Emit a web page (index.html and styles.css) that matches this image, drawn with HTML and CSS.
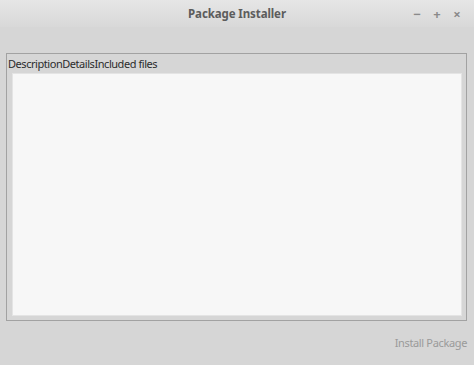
FILE: index.html
```
<!DOCTYPE html>
<html lang="en">
<head>
  <meta charset="UTF-8" />
  <title>Package Installer</title>
  <link rel="stylesheet" href="styles.css">
</head>
<body>
  <div class="window">
    <header class="titlebar">
      <span class="title">Package Installer</span>
      <div class="controls">
        <span class="ctl">&minus;</span>
        <span class="ctl">+</span>
        <span class="ctl">&times;</span>
      </div>
    </header>

    <main class="content">
      <div class="frame">
        <div class="tabs">
          <span>Description</span><span>Details</span><span>Included files</span>
        </div>
        <div class="pane"></div>
      </div>
    </main>

    <footer class="actions">
      <span class="install">Install Package</span>
    </footer>
  </div>
</body>
</html>
```

FILE: styles.css
```
body {
  margin: 0;
  font-family: "Noto Sans", "Open Sans", sans-serif;
  background: #d6d6d6;
}

.window {
  width: 474px;
  height: 365px;
  display: flex;
  flex-direction: column;
  background: #d6d6d6;
}

.titlebar {
  height: 27px;
  display: flex;
  align-items: center;
  justify-content: center;
  position: relative;
  background: linear-gradient(#e6e6e6, #d8d8d8);
}
.title {
  font-size: 11.5px;
  font-weight: bold;
  color: #5c5c5c;
  letter-spacing: -0.1px;
}
.controls {
  position: absolute;
  right: 11px;
  top: 5px;
  display: flex;
  gap: 8px;
}
.ctl {
  width: 12px;
  text-align: center;
  font-size: 13px;
  font-weight: bold;
  color: #8a8a8a;
}

.content {
  padding: 26px 7px 0 6px;
}
.frame {
  height: 266px;
  border: 1px solid #a2a2a2;
  display: flex;
  flex-direction: column;
}
.tabs {
  font-size: 11px;
  letter-spacing: -0.45px;
  color: #2c2c2c;
  padding: 2px 0 0 1px;
  height: 17px;
}
.pane {
  flex: 1;
  margin: 0 4px 4px 5px;
  background: #f7f7f7;
  border: 1px solid #e4e4e4;
}

.actions {
  display: flex;
  justify-content: flex-end;
  padding: 14px 7px 0 0;
}
.install {
  font-size: 11px;
  letter-spacing: -0.35px;
  color: #9a9a9a;
}
```
